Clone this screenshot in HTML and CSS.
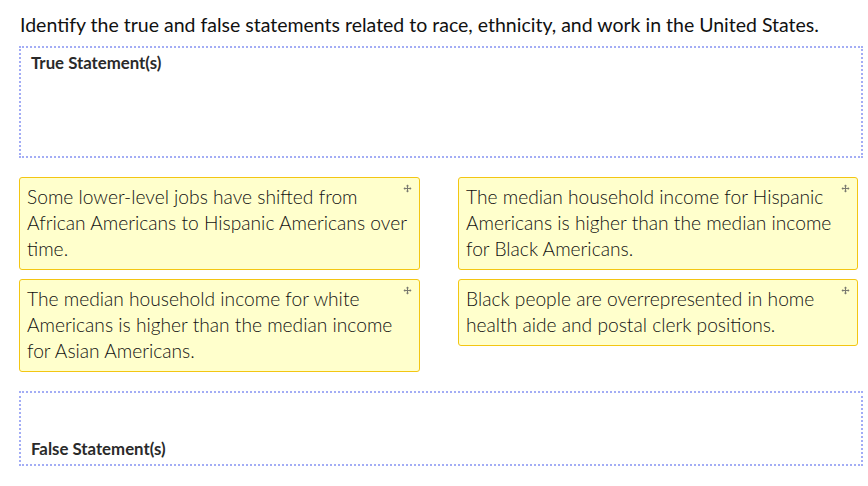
FILE: index.html
```html
<!DOCTYPE html>
<html>
<head>
<meta charset="utf-8">
<link rel="stylesheet" href="styles.css">
</head>
<body>
<div class="page">
  <p class="prompt">Identify the true and false statements related to race, ethnicity, and work in the United States.</p>
  <div class="zone zone-true">
    <div class="zone-label">True Statement(s)</div>
  </div>
  <div class="cards">
    <div class="card">Some lower-level jobs have shifted from African Americans to Hispanic Americans over time.<svg class="move" viewBox="0 0 10 10"><path d="M5 0.5 L6.8 2.4 H5.6 V4.4 H7.6 V3.2 L9.5 5 L7.6 6.8 V5.6 H5.6 V7.6 H6.8 L5 9.5 L3.2 7.6 H4.4 V5.6 H2.4 V6.8 L0.5 5 L2.4 3.2 V4.4 H4.4 V2.4 H3.2 Z"/></svg></div>
    <div class="card">The median household income for Hispanic Americans is higher than the median income for Black Americans.<svg class="move" viewBox="0 0 10 10"><path d="M5 0.5 L6.8 2.4 H5.6 V4.4 H7.6 V3.2 L9.5 5 L7.6 6.8 V5.6 H5.6 V7.6 H6.8 L5 9.5 L3.2 7.6 H4.4 V5.6 H2.4 V6.8 L0.5 5 L2.4 3.2 V4.4 H4.4 V2.4 H3.2 Z"/></svg></div>
    <div class="card">The median household income for white Americans is higher than the median income for Asian Americans.<svg class="move" viewBox="0 0 10 10"><path d="M5 0.5 L6.8 2.4 H5.6 V4.4 H7.6 V3.2 L9.5 5 L7.6 6.8 V5.6 H5.6 V7.6 H6.8 L5 9.5 L3.2 7.6 H4.4 V5.6 H2.4 V6.8 L0.5 5 L2.4 3.2 V4.4 H4.4 V2.4 H3.2 Z"/></svg></div>
    <div class="card">Black people are overrepresented in home health aide and postal clerk positions.<svg class="move" viewBox="0 0 10 10"><path d="M5 0.5 L6.8 2.4 H5.6 V4.4 H7.6 V3.2 L9.5 5 L7.6 6.8 V5.6 H5.6 V7.6 H6.8 L5 9.5 L3.2 7.6 H4.4 V5.6 H2.4 V6.8 L0.5 5 L2.4 3.2 V4.4 H4.4 V2.4 H3.2 Z"/></svg></div>
  </div>
  <div class="zone zone-false">
    <div class="zone-label">False Statement(s)</div>
  </div>
</div>
</body>
</html>
```
FILE: styles.css
```css
html, body {
  margin: 0;
  padding: 0;
  background: #ffffff;
}
.page {
  padding: 13px 0 0 19px;
  width: 844px;
  font-family: "Lato", "Open Sans", sans-serif;
  color: #1c1c1c;
}
.prompt {
  margin: 0 0 9px 1px;
  font-size: 19.5px;
  line-height: 24px;
  color: #111;
}
.zone {
  box-sizing: border-box;
  width: 844px;
  border: 2px dotted #a3adf5;
  display: flex;
  flex-direction: column;
  padding: 0 10px;
}
.zone-true {
  height: 112px;
  padding-top: 5px;
}
.zone-false {
  height: 75px;
  justify-content: flex-end;
  padding-bottom: 5px;
}
.zone-label {
  font-weight: bold;
  font-size: 16.8px;
  line-height: 20px;
  color: #2a2a2a;
}
.cards {
  display: grid;
  grid-template-columns: 401px 400px;
  column-gap: 38px;
  row-gap: 9px;
  align-items: start;
  padding: 19px 0 19px 0;
}
.card {
  position: relative;
  box-sizing: border-box;
  background: #ffffcc;
  border: 1px solid #f3c613;
  border-radius: 3px;
  padding: 6px 10px 7px 7px;
  font-size: 19.2px;
  font-weight: 300;
  line-height: 26px;
  color: #111;
}
.move {
  position: absolute;
  top: 6px;
  right: 7px;
  width: 9px;
  height: 9px;
  fill: #7a7a70;
}
```
